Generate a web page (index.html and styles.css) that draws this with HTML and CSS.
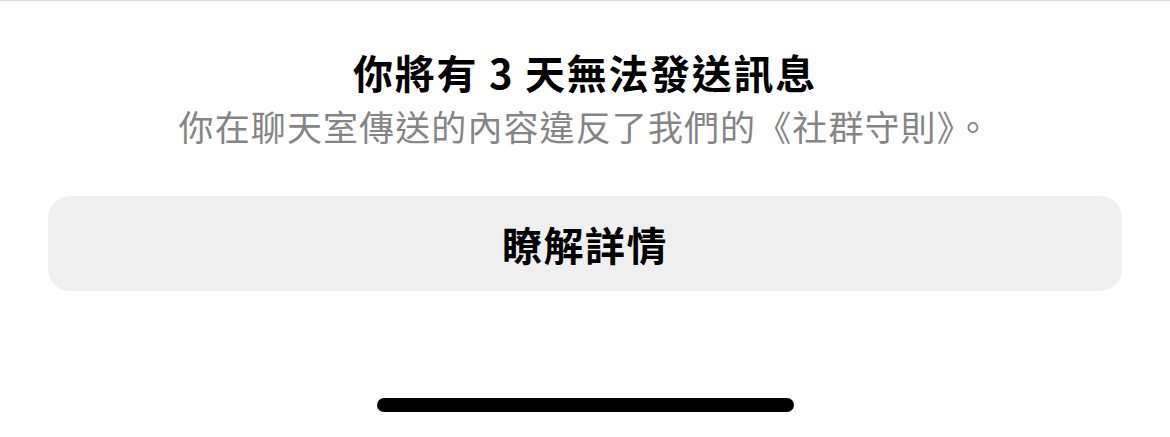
FILE: index.html
```html
<!DOCTYPE html>
<html lang="zh-Hant">
<head>
<meta charset="utf-8">
<link rel="stylesheet" href="styles.css">
</head>
<body>
<div class="sheet">
  <h1 class="title">你將有 3 天無法發送訊息</h1>
  <p class="subtitle">你在聊天室傳送的內容違反了我們的《社群守則》。</p>
  <button class="action">瞭解詳情</button>
  <div class="home-indicator"></div>
</div>
</body>
</html>
```
FILE: styles.css
```css
html, body {
  margin: 0;
  padding: 0;
  background: #ffffff;
}
body {
  font-family: "Noto Sans CJK TC", "Noto Sans", sans-serif;
  width: 1170px;
  height: 437px;
  overflow: hidden;
}
.sheet {
  border-top: 1px solid #d9d9d9;
  padding-top: 47px;
  display: flex;
  flex-direction: column;
  align-items: center;
}
.title {
  margin: 0;
  font-size: 40px;
  line-height: 48px;
  font-weight: 700;
  color: #000000;
  letter-spacing: 1.7px;
}
.subtitle {
  margin: 6px 0 0;
  font-size: 35px;
  line-height: 48px;
  font-weight: 400;
  color: #858585;
  letter-spacing: 1.1px;
}
.action {
  margin: 46px 0 0;
  width: 1074px;
  height: 95px;
  border: none;
  border-radius: 22px;
  background: #efefef;
  font-family: inherit;
  font-size: 40px;
  font-weight: 700;
  color: #000000;
  letter-spacing: 1.5px;
  padding: 0;
}
.home-indicator {
  margin-top: 107px;
  width: 417px;
  height: 14px;
  border-radius: 7px;
  background: #000000;
}
```
